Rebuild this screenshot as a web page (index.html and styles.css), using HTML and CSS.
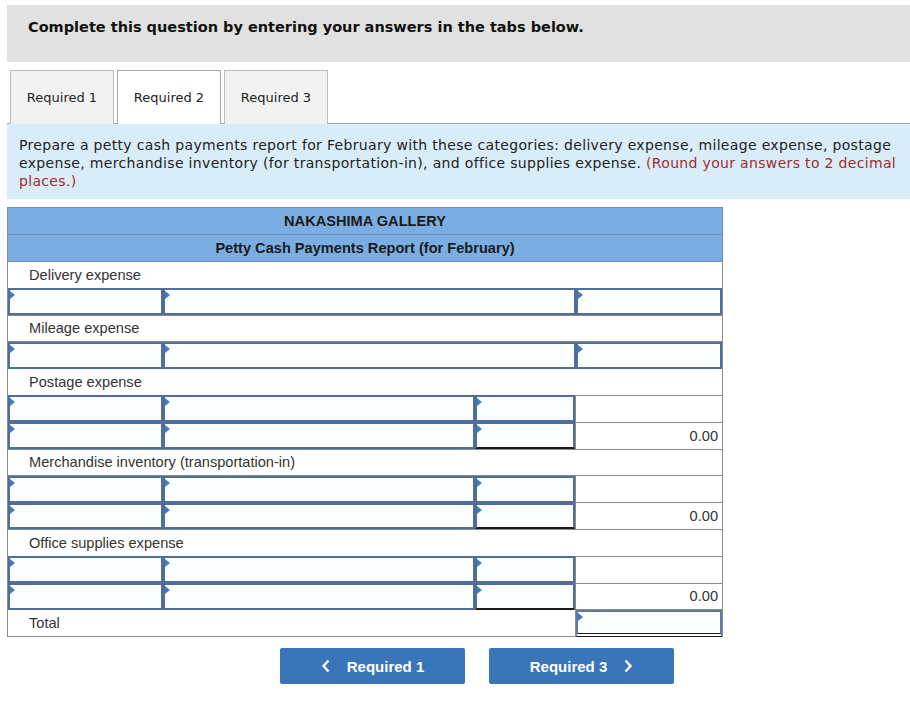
FILE: index.html
```html
<!DOCTYPE html>
<html>
<head>
<meta charset="utf-8">
<link rel="stylesheet" href="styles.css">
</head>
<body>
<div class="page">
  <div class="qhead">Complete this question by entering your answers in the tabs below.</div>
  <div class="tabs">
    <div class="tab">Required 1</div>
    <div class="tab active">Required 2</div>
    <div class="tab">Required 3</div>
  </div>
  <div class="instr">Prepare a petty cash payments report for February with these categories: delivery expense, mileage expense, postage expense, merchandise inventory (for transportation-in), and office supplies expense. <span class="red">(Round your answers to 2 decimal places.)</span></div>

  <table class="rpt">
    <colgroup>
      <col class="w1"><col class="w2"><col class="w3"><col class="w4">
    </colgroup>
    <thead>
      <tr><th colspan="4">NAKASHIMA GALLERY</th></tr>
      <tr><th colspan="4">Petty Cash Payments Report (for February)</th></tr>
    </thead>
    <tbody>
      <tr class="lbl"><td colspan="4">Delivery expense</td></tr>
      <tr class="in"><td><div class="fld"></div></td><td colspan="2"><div class="fld"></div></td><td><div class="fld"></div></td></tr>
      <tr class="lbl"><td colspan="4">Mileage expense</td></tr>
      <tr class="in"><td><div class="fld"></div></td><td colspan="2"><div class="fld"></div></td><td><div class="fld"></div></td></tr>
      <tr class="lbl"><td colspan="4">Postage expense</td></tr>
      <tr class="in"><td><div class="fld"></div></td><td><div class="fld"></div></td><td><div class="fld"></div></td><td class="amt"></td></tr>
      <tr class="in"><td><div class="fld"></div></td><td><div class="fld"></div></td><td><div class="fld ul"></div></td><td class="amt">0.00</td></tr>
      <tr class="lbl"><td colspan="4">Merchandise inventory (transportation-in)</td></tr>
      <tr class="in"><td><div class="fld"></div></td><td><div class="fld"></div></td><td><div class="fld"></div></td><td class="amt"></td></tr>
      <tr class="in"><td><div class="fld"></div></td><td><div class="fld"></div></td><td><div class="fld ul"></div></td><td class="amt">0.00</td></tr>
      <tr class="lbl"><td colspan="4">Office supplies expense</td></tr>
      <tr class="in"><td><div class="fld"></div></td><td><div class="fld"></div></td><td><div class="fld"></div></td><td class="amt"></td></tr>
      <tr class="in"><td><div class="fld"></div></td><td><div class="fld"></div></td><td><div class="fld ul"></div></td><td class="amt">0.00</td></tr>
      <tr class="lbl total"><td colspan="3">Total</td><td class="tot"><div class="fld dbl"></div></td></tr>
    </tbody>
  </table>

  <div class="nav">
    <button class="btn"><svg class="chev" width="10" height="14" viewBox="0 0 10 14"><path d="M7.5 1.5 L2.5 7 L7.5 12.5" fill="none" stroke="#fff" stroke-width="2.4"/></svg>Required 1</button>
    <button class="btn">Required 3<svg class="chev r" width="10" height="14" viewBox="0 0 10 14"><path d="M2.5 1.5 L7.5 7 L2.5 12.5" fill="none" stroke="#fff" stroke-width="2.4"/></svg></button>
  </div>
</div>
</body>
</html>
```

FILE: styles.css
```css
html, body {
  margin: 0;
  padding: 0;
  background: #fff;
}
body {
  padding: 5px 0 0 7px;
  font-family: "Liberation Sans", Arial, sans-serif;
  color: #222;
}
.page {
  width: 903px;
}
.qhead {
  background: #e1e1e1;
  height: 57px;
  box-sizing: border-box;
  padding: 14px 0 0 21px;
  font-family: "DejaVu Sans", Verdana, sans-serif;
  font-weight: bold;
  font-size: 14.5px;
  color: #111;
}
.tabs {
  display: flex;
  gap: 3px;
  margin-top: 8px;
  padding-left: 3px;
  border-bottom: 1px solid #a8a8a8;
  height: 53px;
}
.tab {
  width: 104px;
  box-sizing: border-box;
  height: 54px;
  border: 1px solid #bdbdbd;
  border-bottom: none;
  background: #f2f2f2;
  font-family: "DejaVu Sans", Verdana, sans-serif;
  font-size: 13px;
  color: #222;
  display: flex;
  align-items: center;
  justify-content: center;
}
.tab.active {
  background: #fff;
  border-color: #a8a8a8;
  position: relative;
  z-index: 1;
}
.instr {
  background: #d9edf9;
  height: 75px;
  box-sizing: border-box;
  padding: 12px 4px 0 12px;
  font-family: "DejaVu Sans", Verdana, sans-serif;
  font-size: 14px;
  letter-spacing: 0.33px;
  line-height: 18px;
  color: #222;
}
.red { color: #a52a2a; }

.rpt {
  margin-top: 8px;
  width: 715px;
  border-collapse: collapse;
  table-layout: fixed;
  border: 1px solid #8a8a8a;
  font-size: 14.6px;
}
.w1 { width: 155px; }
.w2 { width: 312px; }
.w3 { width: 101px; }
.w4 { width: 147px; }
.rpt th {
  background: #7aaee2;
  height: 26px;
  padding: 0;
  text-align: center;
  font-weight: bold;
  font-size: 14.6px;
  color: #1a1a1a;
  border-bottom: 1px solid #6b8db5;
  border-right: 1px solid #6b8db5;
}
.rpt td {
  padding: 0;
  height: 25.8px;
  vertical-align: middle;
}
.lbl td {
  padding-left: 21px;
  color: #333;
  border-bottom: 1px solid #8a8a8a;
  border-right: 1px solid #8a8a8a;
}
.lbl.total td.tot {
  padding: 0;
  border-bottom: none;
}
.in td {
  border-bottom: 1px solid #8a8a8a;
}
.in td.amt {
  text-align: right;
  padding-right: 4px;
  color: #333;
  border-left: 1px solid #8a8a8a;
  border-right: 1px solid #8a8a8a;
}
.fld {
  position: relative;
  box-sizing: border-box;
  height: 26.8px;
  margin: -1px 0 -1px 0;
  border: 2px solid #4f6f9a;
  background: #fbfdff;
}
.fld::before {
  content: "";
  position: absolute;
  left: 0;
  top: 1px;
  border-top: 4px solid transparent;
  border-bottom: 4px solid transparent;
  border-left: 5px solid #3d7dc0;
}
.fld.ul {
  border-bottom-color: #1a1a1a;
}
.fld.dbl {
  border-color: #5c7aa3;
  border-bottom: 4px double #1a1a1a;
}

.nav {
  display: flex;
  gap: 24px;
  margin-top: 11px;
  padding-left: 273px;
}
.btn {
  width: 185px;
  height: 36px;
  background: #3a74b9;
  border: none;
  border-radius: 2px;
  color: #fff;
  font-family: "Liberation Sans", Arial, sans-serif;
  font-weight: bold;
  font-size: 15px;
  display: flex;
  align-items: center;
  justify-content: center;
  padding: 0;
}
.chev {
  margin-right: 16px;
}
.chev.r {
  margin-right: 0;
  margin-left: 16px;
}
```
